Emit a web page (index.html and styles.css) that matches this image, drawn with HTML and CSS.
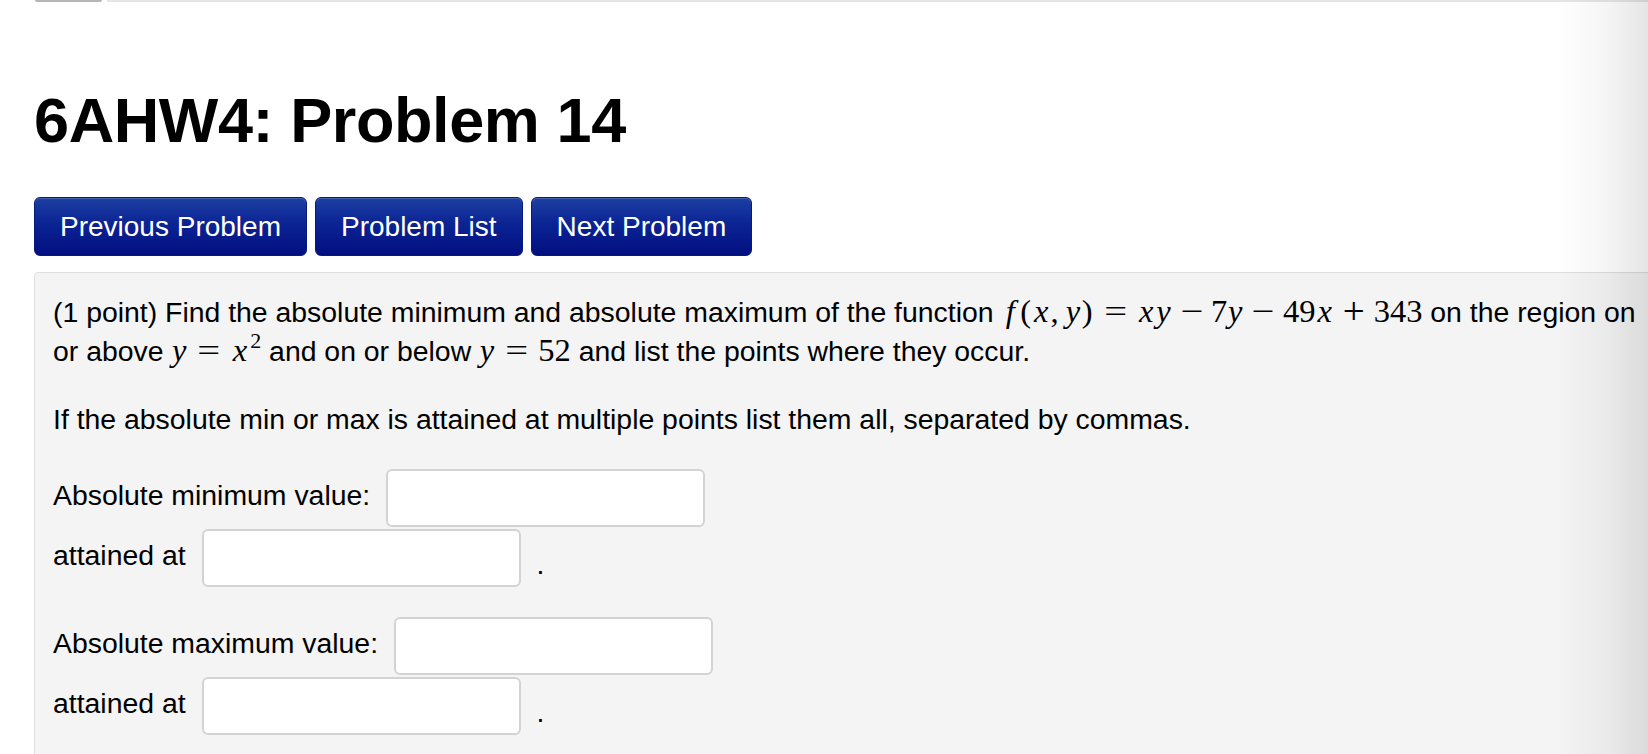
FILE: index.html
```html
<!DOCTYPE html>
<html lang="en">
<head>
<meta charset="utf-8">
<title>6AHW4: Problem 14</title>
<link rel="stylesheet" href="styles.css">
</head>
<body>
<div class="topbar"><div class="tab"></div><div class="rule"></div></div>
<main class="page">
  <h1 class="title">6AHW4: Problem 14</h1>
  <nav class="nav">
    <a class="btn">Previous Problem</a>
    <a class="btn">Problem List</a>
    <a class="btn">Next Problem</a>
  </nav>
  <section class="problem">
    <p class="text">(1 point) Find the absolute minimum and absolute maximum of the function <span class="math"><span class="mi f">f</span><span class="mp">(</span><span class="mi x">x</span><span class="mc">,</span><span class="mi y">y</span><span class="mp">)</span><span class="mo rel">=</span><span class="mi x">x</span><span class="mi y">y</span><span class="mo bin">&minus;</span>7<span class="mi y">y</span><span class="mo bin">&minus;</span>49<span class="mi x">x</span><span class="mo bin plus">+</span>343</span> on the region on or above <span class="math"><span class="mi y">y</span><span class="mo rel">=</span><span class="mi x">x</span><sup>2</sup></span> and on or below <span class="math"><span class="mi y">y</span><span class="mo rel">=</span>52</span> and list the points where they occur.</p>
    <p class="text gap">If the absolute min or max is attained at multiple points list them all, separated by commas.</p>
    <div class="group first">
      <div class="row"><span class="label">Absolute minimum value:</span><input class="answer" type="text"></div>
      <div class="row"><span class="label">attained at</span><input class="answer" type="text"><span class="dot">.</span></div>
    </div>
    <div class="group">
      <div class="row"><span class="label">Absolute maximum value:</span><input class="answer" type="text"></div>
      <div class="row"><span class="label">attained at</span><input class="answer" type="text"><span class="dot">.</span></div>
    </div>
  </section>
</main>
<div class="edge-shade"></div>
</body>
</html>
```
FILE: styles.css
```css
html, body {
  margin: 0;
  padding: 0;
  overflow: hidden;
  background: #ffffff;
}
body {
  font-family: "Liberation Sans", Helvetica, Arial, sans-serif;
  color: #000;
  height: 754px;
}
.topbar {
  display: flex;
  height: 2px;
  padding-left: 35px;
}
.tab {
  width: 67px;
  height: 2px;
  background: #b5b5b5;
  border-radius: 0 0 4px 4px;
}
.rule {
  flex: 1;
  height: 2px;
  margin-left: 5px;
  background: #e6e6e6;
}
.page {
  padding-left: 34px;
}
.title {
  font-size: 63px;
  font-weight: bold;
  line-height: 69px;
  margin: 84px 0 0 0;
  letter-spacing: -0.4px;
}
.nav {
  display: flex;
  gap: 8px;
  margin-top: 42px;
}
.btn {
  display: block;
  font-size: 28px;
  line-height: 33px;
  padding: 12px 25px;
  color: #fff;
  border: 1px solid #061a7a;
  border-radius: 6px;
  background: linear-gradient(to bottom, #1d3fa2 0%, #0b2494 45%, #020f80 100%);
  box-shadow: inset 0 1px 0 rgba(255,255,255,0.18);
}
.problem {
  box-sizing: border-box;
  width: 1632px;
  margin-top: 16px;
  padding: 20px 18px 40px 18px;
  background: #f4f4f4;
  border: 1px solid #dedede;
  border-radius: 4px;
  min-height: 500px;
}
.text {
  margin: 0;
  font-size: 28.4px;
  line-height: 39px;
}
.text.gap {
  margin-top: 29px;
}
.math {
  font-family: "Liberation Serif", "Times New Roman", serif;
  font-size: 32.5px;
  line-height: 1;
  white-space: nowrap;
}
.mi {
  display: inline-block;
  font-style: italic;
  text-align: center;
}
.mi.f { width: 0.55em; }
.mi.x { width: 0.572em; }
.mi.y { width: 0.49em; }
.mp {
  display: inline-block;
  width: 0.389em;
  text-align: center;
}
.mc {
  display: inline-block;
  width: 0.445em;
  text-align: left;
}
.mo {
  display: inline-block;
  width: 0.778em;
  text-align: center;
  transform: scaleX(1.25);
}
.mo.plus {
  transform: scale(1.2, 1.15);
}
.mo.rel {
  margin: 0 0.278em;
}
.mo.bin {
  margin: 0 0.222em;
}
.math sup {
  font-size: 22px;
  line-height: 0;
  vertical-align: 13px;
  margin-left: 1px;
}
.group {
  margin-top: 30px;
}
.group.first {
  margin-top: 30px;
}
.row {
  display: flex;
  align-items: center;
  margin-bottom: 2px;
}
.label {
  font-size: 28.4px;
  line-height: 39px;
  margin-bottom: 5px;
}
.answer {
  box-sizing: border-box;
  width: 319px;
  height: 58px;
  margin: 0 0 0 16px;
  padding: 0 10px;
  font-size: 28px;
  background: #fff;
  border: 2px solid #d3d3d3;
  border-radius: 6px;
  outline: none;
}
.dot {
  font-size: 28.4px;
  line-height: 39px;
  margin-left: 16px;
  margin-bottom: -12px;
}
.edge-shade {
  position: fixed;
  top: 0;
  right: 0;
  bottom: 0;
  width: 90px;
  background: linear-gradient(to right, rgba(0,0,0,0) 0%, rgba(0,0,0,0.04) 55%, rgba(0,0,0,0.1) 100%);
  pointer-events: none;
}
```
